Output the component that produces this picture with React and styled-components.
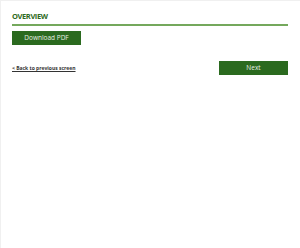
import React from 'react'
import styled, { createGlobalStyle } from 'styled-components'

const Global = createGlobalStyle`
  html, body { margin: 0; padding: 0; background: #fff; }
  body { font-family: "Open Sans", "Liberation Sans", sans-serif; }
`

const Page = styled.main`
  box-sizing: border-box;
  width: 300px;
  height: 248px;
  border-top: 1px solid #f0f0f0;
  border-left: 1px solid #f0f0f0;
  padding: 9px 12px 0 11px;
`

const Title = styled.h1`
  margin: 0;
  font-size: 7.5px;
  font-weight: 700;
  letter-spacing: -0.4px;
  color: #2f6b22;
  line-height: 12px;
  padding-bottom: 2px;
  border-bottom: 2px solid #74a85c;
`

const Button = styled.button`
  display: block;
  box-sizing: border-box;
  width: 69px;
  height: 14px;
  border: none;
  border-radius: 0;
  background: #2b6a1f;
  color: #e8f0e4;
  font-family: "Open Sans", "Liberation Sans", sans-serif;
  font-size: 6.5px;
  line-height: 14px;
  padding: 0;
  cursor: pointer;
`

const Top = styled.div`
  display: flex;
  margin-top: 5px;
`

const Footer = styled.div`
  display: flex;
  align-items: center;
  justify-content: space-between;
  margin-top: 16px;
`

const Back = styled.a`
  font-size: 5px;
  font-weight: 700;
  color: #333;
  text-decoration: underline;
  cursor: pointer;
`

export default function App() {
  return (
    <>
      <Global />
      <Page>
        <Title>OVERVIEW</Title>
        <Top>
          <Button>Download PDF</Button>
        </Top>
        <Footer>
          <Back>&lt; Back to previous screen</Back>
          <Button>Next</Button>
        </Footer>
      </Page>
    </>
  )
}
